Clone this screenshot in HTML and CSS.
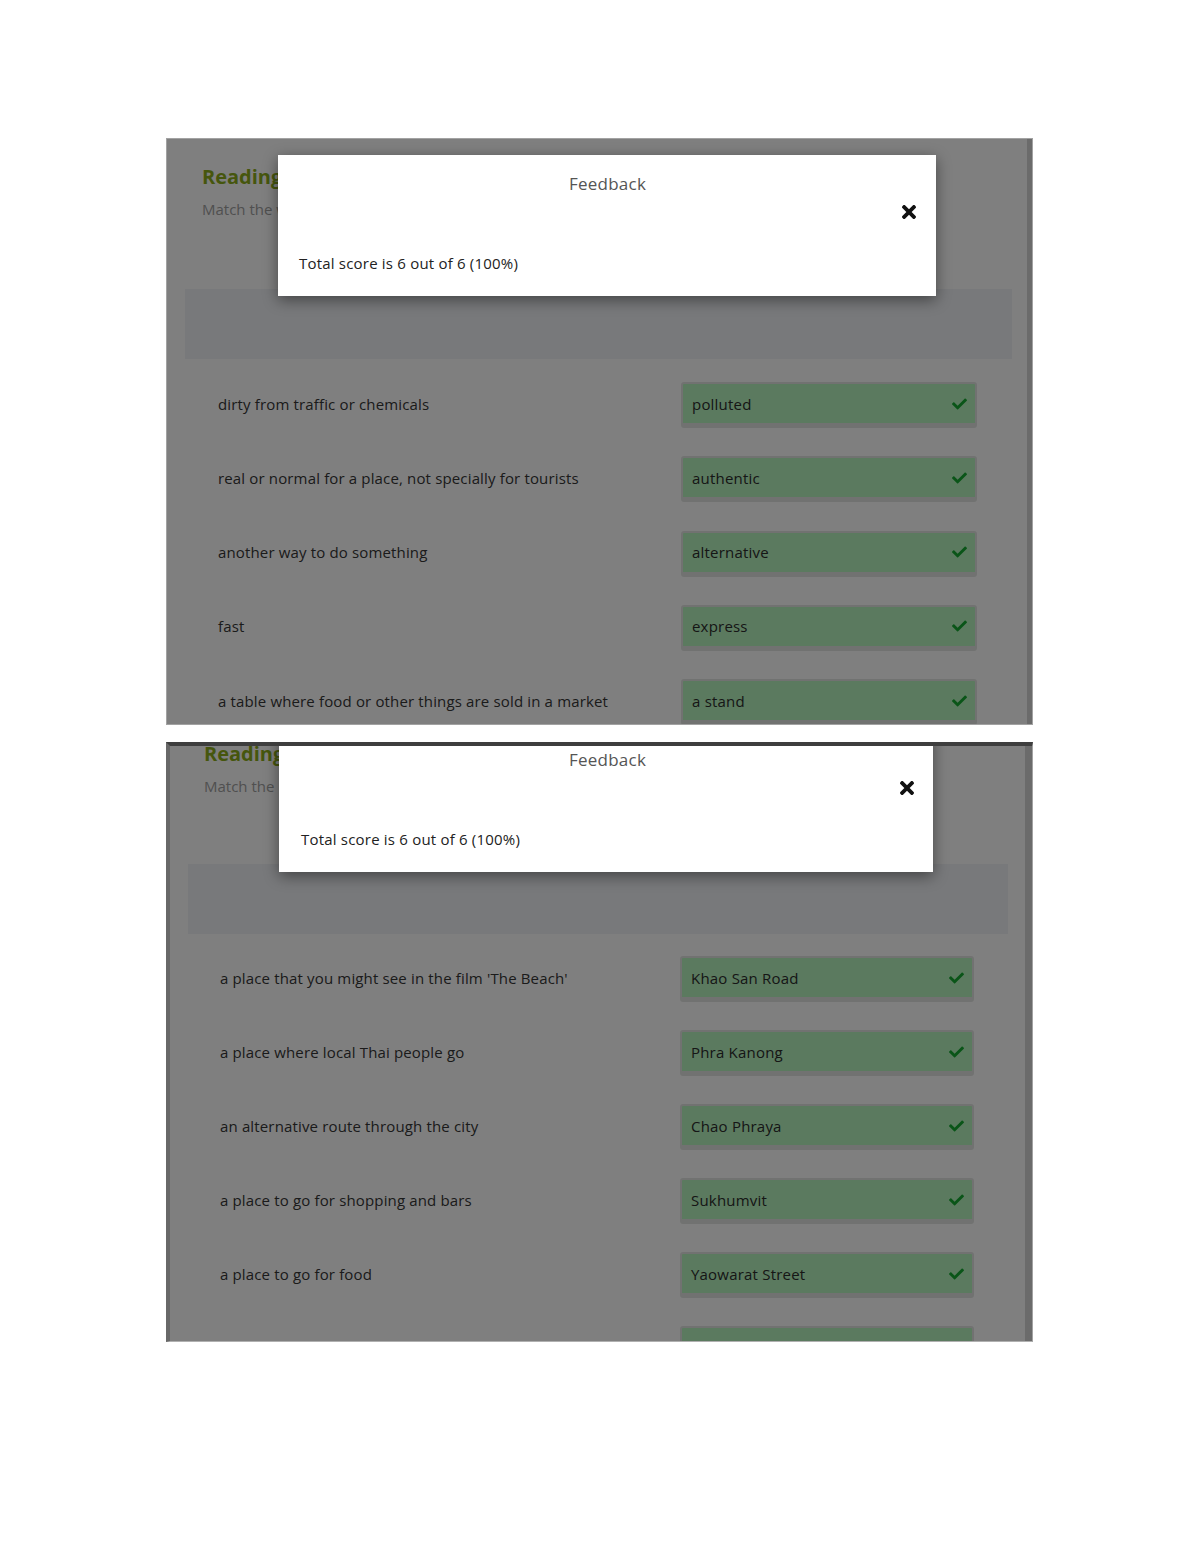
FILE: index.html
```html
<!DOCTYPE html>
<html lang="en">
<head>
<meta charset="utf-8">
<title>Reading – Feedback</title>
<link rel="stylesheet" href="styles.css">
</head>
<body>
<main class="page">
  <section class="shot shot-1">
    <div class="screen">
      <div class="content">
        <h2 class="title">Reading</h2>
        <p class="instr">Match the words with their meanings.</p>
        <div class="band"></div>
        <ul class="rows">
          <li class="row"><span class="label">dirty from traffic or chemicals</span><span class="answer"><span>polluted</span><svg class="check" viewBox="0 64 512 384"><path d="M173.9 439.4l-166.4-166.4c-10-10-10-26.2 0-36.2l36.2-36.2c10-10 26.2-10 36.2 0L192 312.7 432.1 72.6c10-10 26.2-10 36.2 0l36.2 36.2c10 10 10 26.2 0 36.2l-294.4 294.4c-10 10-26.2 10-36.2 0z"/></svg></span></li>
          <li class="row"><span class="label">real or normal for a place, not specially for tourists</span><span class="answer"><span>authentic</span><svg class="check" viewBox="0 64 512 384"><path d="M173.9 439.4l-166.4-166.4c-10-10-10-26.2 0-36.2l36.2-36.2c10-10 26.2-10 36.2 0L192 312.7 432.1 72.6c10-10 26.2-10 36.2 0l36.2 36.2c10 10 10 26.2 0 36.2l-294.4 294.4c-10 10-26.2 10-36.2 0z"/></svg></span></li>
          <li class="row"><span class="label">another way to do something</span><span class="answer"><span>alternative</span><svg class="check" viewBox="0 64 512 384"><path d="M173.9 439.4l-166.4-166.4c-10-10-10-26.2 0-36.2l36.2-36.2c10-10 26.2-10 36.2 0L192 312.7 432.1 72.6c10-10 26.2-10 36.2 0l36.2 36.2c10 10 10 26.2 0 36.2l-294.4 294.4c-10 10-26.2 10-36.2 0z"/></svg></span></li>
          <li class="row"><span class="label">fast</span><span class="answer"><span>express</span><svg class="check" viewBox="0 64 512 384"><path d="M173.9 439.4l-166.4-166.4c-10-10-10-26.2 0-36.2l36.2-36.2c10-10 26.2-10 36.2 0L192 312.7 432.1 72.6c10-10 26.2-10 36.2 0l36.2 36.2c10 10 10 26.2 0 36.2l-294.4 294.4c-10 10-26.2 10-36.2 0z"/></svg></span></li>
          <li class="row"><span class="label">a table where food or other things are sold in a market</span><span class="answer"><span>a stand</span><svg class="check" viewBox="0 64 512 384"><path d="M173.9 439.4l-166.4-166.4c-10-10-10-26.2 0-36.2l36.2-36.2c10-10 26.2-10 36.2 0L192 312.7 432.1 72.6c10-10 26.2-10 36.2 0l36.2 36.2c10 10 10 26.2 0 36.2l-294.4 294.4c-10 10-26.2 10-36.2 0z"/></svg></span></li>
        </ul>
      </div>
      <div class="scrollbar"></div>
    </div>
    <div class="overlay"></div>
    <div class="modal">
      <div class="modal-title">Feedback</div>
      <div class="modal-close"><svg class="close-icon" viewBox="0 80 352 352"><path d="M242.7 256l100.1-100.1c12.3-12.3 12.3-32.2 0-44.5l-22.2-22.2c-12.3-12.3-32.2-12.3-44.5 0L176 189.3 75.9 89.2c-12.3-12.3-32.2-12.3-44.5 0L9.2 111.5c-12.3 12.3-12.3 32.2 0 44.5L109.3 256 9.2 356.1c-12.3 12.3-12.3 32.2 0 44.5l22.2 22.2c12.3 12.3 32.2 12.3 44.5 0L176 322.7l100.1 100.1c12.3 12.3 32.2 12.3 44.5 0l22.2-22.2c12.3-12.3 12.3-32.2 0-44.5L242.7 256z"/></svg></div>
      <div class="modal-body">Total score is 6 out of 6 (100%)</div>
    </div>
  </section>

  <section class="shot shot-2">
    <div class="screen">
      <div class="content">
        <h2 class="title">Reading</h2>
        <p class="instr">Match the places with the descriptions.</p>
        <div class="band"></div>
        <ul class="rows">
          <li class="row"><span class="label">a place that you might see in the film 'The Beach'</span><span class="answer"><span>Khao San Road</span><svg class="check" viewBox="0 64 512 384"><path d="M173.9 439.4l-166.4-166.4c-10-10-10-26.2 0-36.2l36.2-36.2c10-10 26.2-10 36.2 0L192 312.7 432.1 72.6c10-10 26.2-10 36.2 0l36.2 36.2c10 10 10 26.2 0 36.2l-294.4 294.4c-10 10-26.2 10-36.2 0z"/></svg></span></li>
          <li class="row"><span class="label">a place where local Thai people go</span><span class="answer"><span>Phra Kanong</span><svg class="check" viewBox="0 64 512 384"><path d="M173.9 439.4l-166.4-166.4c-10-10-10-26.2 0-36.2l36.2-36.2c10-10 26.2-10 36.2 0L192 312.7 432.1 72.6c10-10 26.2-10 36.2 0l36.2 36.2c10 10 10 26.2 0 36.2l-294.4 294.4c-10 10-26.2 10-36.2 0z"/></svg></span></li>
          <li class="row"><span class="label">an alternative route through the city</span><span class="answer"><span>Chao Phraya</span><svg class="check" viewBox="0 64 512 384"><path d="M173.9 439.4l-166.4-166.4c-10-10-10-26.2 0-36.2l36.2-36.2c10-10 26.2-10 36.2 0L192 312.7 432.1 72.6c10-10 26.2-10 36.2 0l36.2 36.2c10 10 10 26.2 0 36.2l-294.4 294.4c-10 10-26.2 10-36.2 0z"/></svg></span></li>
          <li class="row"><span class="label">a place to go for shopping and bars</span><span class="answer"><span>Sukhumvit</span><svg class="check" viewBox="0 64 512 384"><path d="M173.9 439.4l-166.4-166.4c-10-10-10-26.2 0-36.2l36.2-36.2c10-10 26.2-10 36.2 0L192 312.7 432.1 72.6c10-10 26.2-10 36.2 0l36.2 36.2c10 10 10 26.2 0 36.2l-294.4 294.4c-10 10-26.2 10-36.2 0z"/></svg></span></li>
          <li class="row"><span class="label">a place to go for food</span><span class="answer"><span>Yaowarat Street</span><svg class="check" viewBox="0 64 512 384"><path d="M173.9 439.4l-166.4-166.4c-10-10-10-26.2 0-36.2l36.2-36.2c10-10 26.2-10 36.2 0L192 312.7 432.1 72.6c10-10 26.2-10 36.2 0l36.2 36.2c10 10 10 26.2 0 36.2l-294.4 294.4c-10 10-26.2 10-36.2 0z"/></svg></span></li>
          <li class="row"><span class="label"></span><span class="answer"><span></span><svg class="check" viewBox="0 64 512 384"><path d="M173.9 439.4l-166.4-166.4c-10-10-10-26.2 0-36.2l36.2-36.2c10-10 26.2-10 36.2 0L192 312.7 432.1 72.6c10-10 26.2-10 36.2 0l36.2 36.2c10 10 10 26.2 0 36.2l-294.4 294.4c-10 10-26.2 10-36.2 0z"/></svg></span></li>
        </ul>
      </div>
      <div class="scrollbar"></div>
    </div>
    <div class="overlay"></div>
    <div class="modal">
      <div class="modal-title">Feedback</div>
      <div class="modal-close"><svg class="close-icon" viewBox="0 80 352 352"><path d="M242.7 256l100.1-100.1c12.3-12.3 12.3-32.2 0-44.5l-22.2-22.2c-12.3-12.3-32.2-12.3-44.5 0L176 189.3 75.9 89.2c-12.3-12.3-32.2-12.3-44.5 0L9.2 111.5c-12.3 12.3-12.3 32.2 0 44.5L109.3 256 9.2 356.1c-12.3 12.3-12.3 32.2 0 44.5l22.2 22.2c12.3 12.3 32.2 12.3 44.5 0L176 322.7l100.1 100.1c12.3 12.3 32.2 12.3 44.5 0l22.2-22.2c12.3-12.3 12.3-32.2 0-44.5L242.7 256z"/></svg></div>
      <div class="modal-body">Total score is 6 out of 6 (100%)</div>
    </div>
  </section>
</main>
</body>
</html>
```

FILE: styles.css
```css
* { box-sizing: border-box; }

html, body {
  margin: 0;
  padding: 0;
  background: #ffffff;
}

body {
  font-family: "Open Sans", "Noto Sans", "DejaVu Sans", sans-serif;
  color: #333;
}

.page {
  display: flex;
  flex-direction: column;
  gap: 17px;
  padding: 138px 0 0 166px;
}

/* ---------- screenshot frame ---------- */
.shot {
  position: relative;
  width: 867px;
  overflow: hidden;
  background: #fff;
}

.shot-1 {
  height: 587px;
  border: 1px solid #a2a2a2;
}

.shot-2 {
  height: 600px;
  border-top: 4px solid #3e3e3e;
  border-left: 4px solid #686868;
  border-right: 1px solid #a2a2a2;
  border-bottom: 1px solid #b0b0b0;
}

.screen {
  display: flex;
  height: 100%;
}

.content {
  flex: 1;
  min-width: 0;
  padding: 24px 15px 0 18px;
}

.shot-2 .content {
  padding: 0 17px 0 18px;
}

.scrollbar {
  flex: none;
  width: 5px;
  background: #d6d6d6;
}

.shot-2 .scrollbar { width: 7px; }

/* ---------- page content ---------- */
.title {
  margin: 0 0 0 17px;
  font-size: 20px;
  line-height: 27px;
  font-weight: 700;
  color: #8cad1a;
}

.shot-2 .title {
  margin-left: 16px;
  line-height: 16px;
}

.instr {
  margin: 8px 0 0 17px;
  font-size: 15px;
  line-height: 22px;
  color: #a0a0a0;
  white-space: nowrap;
}

.shot-2 .instr {
  margin: 13px 0 0 16px;
}

.band {
  height: 70px;
  margin-top: 69px;
  background: #f0f2f6;
}

.shot-2 .band { margin-top: 67px; }

.rows {
  list-style: none;
  margin: 0;
  padding: 23px 35px 0 33px;
}

.shot-2 .rows { padding: 22px 34px 0 32px; }

.row {
  display: flex;
  align-items: center;
  justify-content: space-between;
  height: 46px;
  margin-bottom: 28.25px;
}

.shot-2 .row { margin-bottom: 28px; }

.label {
  padding-bottom: 3px;
  font-size: 15px;
  letter-spacing: 0.15px;
  color: #363636;
}

.answer {
  flex: none;
  width: 296px;
  height: 46px;
  display: flex;
  align-items: center;
  justify-content: space-between;
  padding: 0 8px 0 9px;
  border: 2px solid #e3e5e3;
  border-bottom-width: 5px;
  border-radius: 3px;
  background: #b6f4be;
  font-size: 15px;
  letter-spacing: 0.2px;
  color: #2c2c2c;
}

.shot-2 .answer { width: 294px; }

.check {
  width: 15px;
  height: 12px;
  fill: #14aa30;
}

/* ---------- modal ---------- */
.overlay {
  position: absolute;
  inset: 0;
  background: rgba(0, 0, 0, 0.5);
}

.modal {
  position: absolute;
  left: 111px;
  top: 16px;
  width: 658px;
  height: 141px;
  display: flex;
  flex-direction: column;
  padding: 17px 20px 0 21px;
  background: #fff;
  box-shadow: 0 4px 14px rgba(0, 0, 0, 0.45);
}

.shot-2 .modal {
  left: 109px;
  top: -15px;
  width: 654px;
  padding: 17px 19px 0 22px;
}

.modal-title {
  text-align: center;
  font-size: 17px;
  line-height: 24px;
  letter-spacing: 0.25px;
  color: #555;
}

.modal-close {
  display: flex;
  justify-content: flex-end;
  margin-top: 9px;
}

.close-icon {
  width: 14px;
  height: 14px;
  fill: #111;
}

.modal-body {
  margin-top: 34px;
  font-size: 15px;
  line-height: 20px;
  letter-spacing: 0.2px;
  color: #222;
}
```
